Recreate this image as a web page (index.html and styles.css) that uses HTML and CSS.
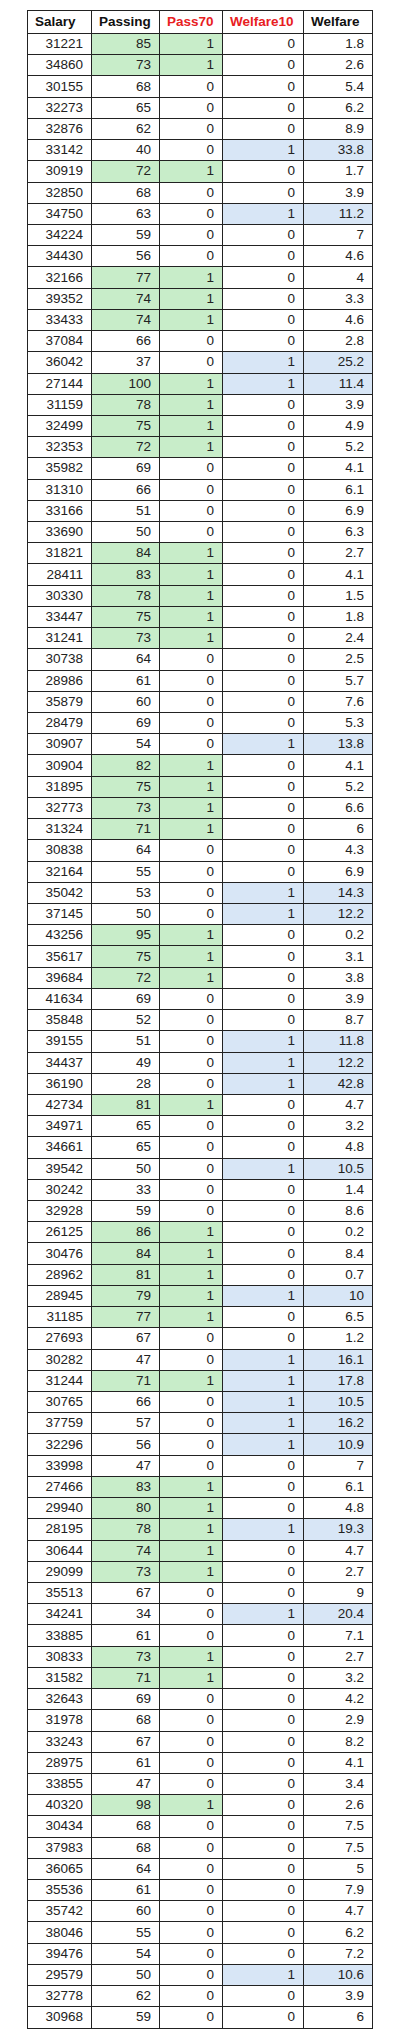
FILE: index.html
```html
<!DOCTYPE html>
<html>
<head>
<meta charset="utf-8">
<link rel="stylesheet" href="styles.css">
</head>
<body>
<table class="sheet">
<colgroup><col class="c1"><col class="c2"><col class="c3"><col class="c4"><col class="c5"></colgroup>
<thead>
<tr><th>Salary</th><th>Passing</th><th class="red">Pass70</th><th class="red">Welfare10</th><th>Welfare</th></tr>
</thead>
<tbody>
<tr><td>31221</td><td class="g">85</td><td class="g">1</td><td>0</td><td>1.8</td></tr>
<tr><td>34860</td><td class="g">73</td><td class="g">1</td><td>0</td><td>2.6</td></tr>
<tr><td>30155</td><td>68</td><td>0</td><td>0</td><td>5.4</td></tr>
<tr><td>32273</td><td>65</td><td>0</td><td>0</td><td>6.2</td></tr>
<tr><td>32876</td><td>62</td><td>0</td><td>0</td><td>8.9</td></tr>
<tr><td>33142</td><td>40</td><td>0</td><td class="b">1</td><td class="b">33.8</td></tr>
<tr><td>30919</td><td class="g">72</td><td class="g">1</td><td>0</td><td>1.7</td></tr>
<tr><td>32850</td><td>68</td><td>0</td><td>0</td><td>3.9</td></tr>
<tr><td>34750</td><td>63</td><td>0</td><td class="b">1</td><td class="b">11.2</td></tr>
<tr><td>34224</td><td>59</td><td>0</td><td>0</td><td>7</td></tr>
<tr><td>34430</td><td>56</td><td>0</td><td>0</td><td>4.6</td></tr>
<tr><td>32166</td><td class="g">77</td><td class="g">1</td><td>0</td><td>4</td></tr>
<tr><td>39352</td><td class="g">74</td><td class="g">1</td><td>0</td><td>3.3</td></tr>
<tr><td>33433</td><td class="g">74</td><td class="g">1</td><td>0</td><td>4.6</td></tr>
<tr><td>37084</td><td>66</td><td>0</td><td>0</td><td>2.8</td></tr>
<tr><td>36042</td><td>37</td><td>0</td><td class="b">1</td><td class="b">25.2</td></tr>
<tr><td>27144</td><td class="g">100</td><td class="g">1</td><td class="b">1</td><td class="b">11.4</td></tr>
<tr><td>31159</td><td class="g">78</td><td class="g">1</td><td>0</td><td>3.9</td></tr>
<tr><td>32499</td><td class="g">75</td><td class="g">1</td><td>0</td><td>4.9</td></tr>
<tr><td>32353</td><td class="g">72</td><td class="g">1</td><td>0</td><td>5.2</td></tr>
<tr><td>35982</td><td>69</td><td>0</td><td>0</td><td>4.1</td></tr>
<tr><td>31310</td><td>66</td><td>0</td><td>0</td><td>6.1</td></tr>
<tr><td>33166</td><td>51</td><td>0</td><td>0</td><td>6.9</td></tr>
<tr><td>33690</td><td>50</td><td>0</td><td>0</td><td>6.3</td></tr>
<tr><td>31821</td><td class="g">84</td><td class="g">1</td><td>0</td><td>2.7</td></tr>
<tr><td>28411</td><td class="g">83</td><td class="g">1</td><td>0</td><td>4.1</td></tr>
<tr><td>30330</td><td class="g">78</td><td class="g">1</td><td>0</td><td>1.5</td></tr>
<tr><td>33447</td><td class="g">75</td><td class="g">1</td><td>0</td><td>1.8</td></tr>
<tr><td>31241</td><td class="g">73</td><td class="g">1</td><td>0</td><td>2.4</td></tr>
<tr><td>30738</td><td>64</td><td>0</td><td>0</td><td>2.5</td></tr>
<tr><td>28986</td><td>61</td><td>0</td><td>0</td><td>5.7</td></tr>
<tr><td>35879</td><td>60</td><td>0</td><td>0</td><td>7.6</td></tr>
<tr><td>28479</td><td>69</td><td>0</td><td>0</td><td>5.3</td></tr>
<tr><td>30907</td><td>54</td><td>0</td><td class="b">1</td><td class="b">13.8</td></tr>
<tr><td>30904</td><td class="g">82</td><td class="g">1</td><td>0</td><td>4.1</td></tr>
<tr><td>31895</td><td class="g">75</td><td class="g">1</td><td>0</td><td>5.2</td></tr>
<tr><td>32773</td><td class="g">73</td><td class="g">1</td><td>0</td><td>6.6</td></tr>
<tr><td>31324</td><td class="g">71</td><td class="g">1</td><td>0</td><td>6</td></tr>
<tr><td>30838</td><td>64</td><td>0</td><td>0</td><td>4.3</td></tr>
<tr><td>32164</td><td>55</td><td>0</td><td>0</td><td>6.9</td></tr>
<tr><td>35042</td><td>53</td><td>0</td><td class="b">1</td><td class="b">14.3</td></tr>
<tr><td>37145</td><td>50</td><td>0</td><td class="b">1</td><td class="b">12.2</td></tr>
<tr><td>43256</td><td class="g">95</td><td class="g">1</td><td>0</td><td>0.2</td></tr>
<tr><td>35617</td><td class="g">75</td><td class="g">1</td><td>0</td><td>3.1</td></tr>
<tr><td>39684</td><td class="g">72</td><td class="g">1</td><td>0</td><td>3.8</td></tr>
<tr><td>41634</td><td>69</td><td>0</td><td>0</td><td>3.9</td></tr>
<tr><td>35848</td><td>52</td><td>0</td><td>0</td><td>8.7</td></tr>
<tr><td>39155</td><td>51</td><td>0</td><td class="b">1</td><td class="b">11.8</td></tr>
<tr><td>34437</td><td>49</td><td>0</td><td class="b">1</td><td class="b">12.2</td></tr>
<tr><td>36190</td><td>28</td><td>0</td><td class="b">1</td><td class="b">42.8</td></tr>
<tr><td>42734</td><td class="g">81</td><td class="g">1</td><td>0</td><td>4.7</td></tr>
<tr><td>34971</td><td>65</td><td>0</td><td>0</td><td>3.2</td></tr>
<tr><td>34661</td><td>65</td><td>0</td><td>0</td><td>4.8</td></tr>
<tr><td>39542</td><td>50</td><td>0</td><td class="b">1</td><td class="b">10.5</td></tr>
<tr><td>30242</td><td>33</td><td>0</td><td>0</td><td>1.4</td></tr>
<tr><td>32928</td><td>59</td><td>0</td><td>0</td><td>8.6</td></tr>
<tr><td>26125</td><td class="g">86</td><td class="g">1</td><td>0</td><td>0.2</td></tr>
<tr><td>30476</td><td class="g">84</td><td class="g">1</td><td>0</td><td>8.4</td></tr>
<tr><td>28962</td><td class="g">81</td><td class="g">1</td><td>0</td><td>0.7</td></tr>
<tr><td>28945</td><td class="g">79</td><td class="g">1</td><td class="b">1</td><td class="b">10</td></tr>
<tr><td>31185</td><td class="g">77</td><td class="g">1</td><td>0</td><td>6.5</td></tr>
<tr><td>27693</td><td>67</td><td>0</td><td>0</td><td>1.2</td></tr>
<tr><td>30282</td><td>47</td><td>0</td><td class="b">1</td><td class="b">16.1</td></tr>
<tr><td>31244</td><td class="g">71</td><td class="g">1</td><td class="b">1</td><td class="b">17.8</td></tr>
<tr><td>30765</td><td>66</td><td>0</td><td class="b">1</td><td class="b">10.5</td></tr>
<tr><td>37759</td><td>57</td><td>0</td><td class="b">1</td><td class="b">16.2</td></tr>
<tr><td>32296</td><td>56</td><td>0</td><td class="b">1</td><td class="b">10.9</td></tr>
<tr><td>33998</td><td>47</td><td>0</td><td>0</td><td>7</td></tr>
<tr><td>27466</td><td class="g">83</td><td class="g">1</td><td>0</td><td>6.1</td></tr>
<tr><td>29940</td><td class="g">80</td><td class="g">1</td><td>0</td><td>4.8</td></tr>
<tr><td>28195</td><td class="g">78</td><td class="g">1</td><td class="b">1</td><td class="b">19.3</td></tr>
<tr><td>30644</td><td class="g">74</td><td class="g">1</td><td>0</td><td>4.7</td></tr>
<tr><td>29099</td><td class="g">73</td><td class="g">1</td><td>0</td><td>2.7</td></tr>
<tr><td>35513</td><td>67</td><td>0</td><td>0</td><td>9</td></tr>
<tr><td>34241</td><td>34</td><td>0</td><td class="b">1</td><td class="b">20.4</td></tr>
<tr><td>33885</td><td>61</td><td>0</td><td>0</td><td>7.1</td></tr>
<tr><td>30833</td><td class="g">73</td><td class="g">1</td><td>0</td><td>2.7</td></tr>
<tr><td>31582</td><td class="g">71</td><td class="g">1</td><td>0</td><td>3.2</td></tr>
<tr><td>32643</td><td>69</td><td>0</td><td>0</td><td>4.2</td></tr>
<tr><td>31978</td><td>68</td><td>0</td><td>0</td><td>2.9</td></tr>
<tr><td>33243</td><td>67</td><td>0</td><td>0</td><td>8.2</td></tr>
<tr><td>28975</td><td>61</td><td>0</td><td>0</td><td>4.1</td></tr>
<tr><td>33855</td><td>47</td><td>0</td><td>0</td><td>3.4</td></tr>
<tr><td>40320</td><td class="g">98</td><td class="g">1</td><td>0</td><td>2.6</td></tr>
<tr><td>30434</td><td>68</td><td>0</td><td>0</td><td>7.5</td></tr>
<tr><td>37983</td><td>68</td><td>0</td><td>0</td><td>7.5</td></tr>
<tr><td>36065</td><td>64</td><td>0</td><td>0</td><td>5</td></tr>
<tr><td>35536</td><td>61</td><td>0</td><td>0</td><td>7.9</td></tr>
<tr><td>35742</td><td>60</td><td>0</td><td>0</td><td>4.7</td></tr>
<tr><td>38046</td><td>55</td><td>0</td><td>0</td><td>6.2</td></tr>
<tr><td>39476</td><td>54</td><td>0</td><td>0</td><td>7.2</td></tr>
<tr><td>29579</td><td>50</td><td>0</td><td class="b">1</td><td class="b">10.6</td></tr>
<tr><td>32778</td><td>62</td><td>0</td><td>0</td><td>3.9</td></tr>
<tr><td>30968</td><td>59</td><td>0</td><td>0</td><td>6</td></tr>
</tbody>
</table>
</body>
</html>
```

FILE: styles.css
```css
html, body {
  margin: 0;
  padding: 0;
  background: #ffffff;
}
body {
  padding: 10px 0 0 27px;
  font-family: "Liberation Sans", Arial, sans-serif;
  font-size: 13.5px;
  color: #222222;
}
.sheet {
  border-collapse: collapse;
  table-layout: fixed;
  width: 345px;
}
.c1 { width: 64px; }
.c2 { width: 68px; }
.c3 { width: 63px; }
.c4 { width: 81px; }
.c5 { width: 69px; }
.sheet th,
.sheet td {
  border: 1px solid #222222;
  padding: 0 8px 0 7px;
  white-space: nowrap;
  overflow: hidden;
  line-height: 16px;
}
.sheet th {
  height: 22px;
  text-align: left;
  font-weight: bold;
  color: #111111;
}
.sheet th.red {
  color: #e8201f;
}
.sheet td {
  height: 20.22px;
  text-align: right;
}
.sheet td.g {
  background: #c8edc9;
}
.sheet td.b {
  background: #d8e6f6;
}
```
